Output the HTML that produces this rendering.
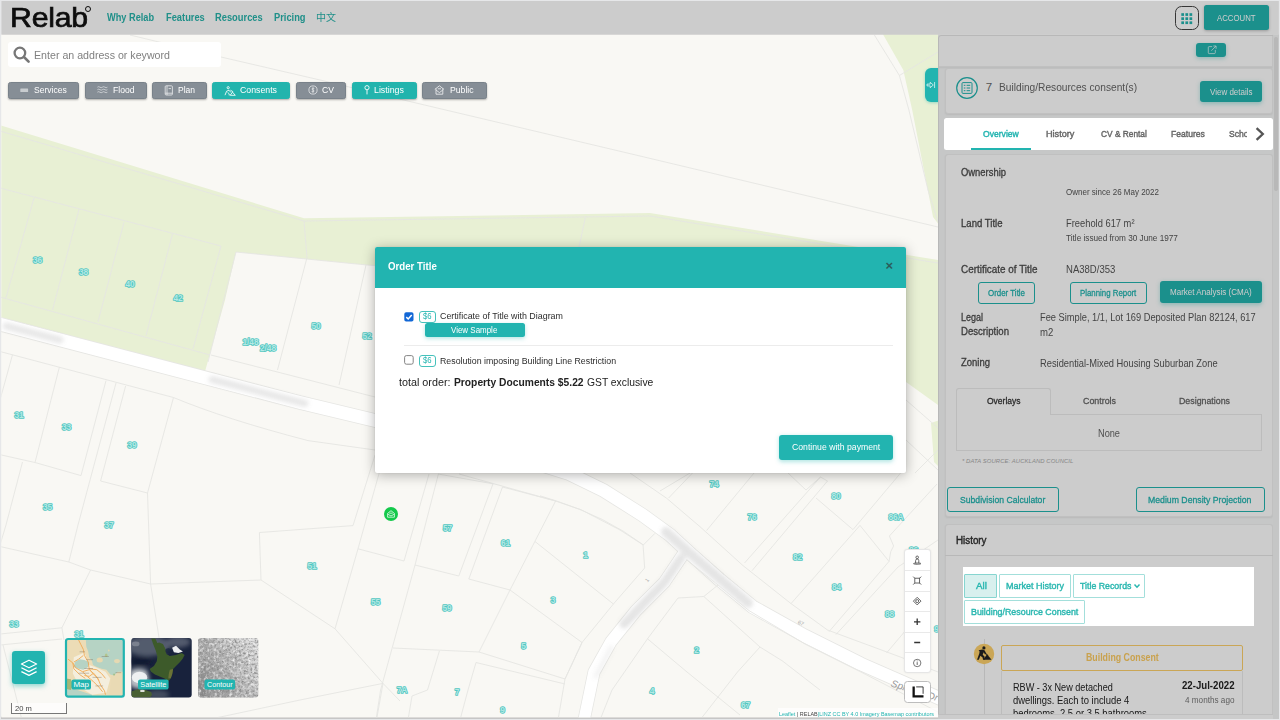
<!DOCTYPE html>
<html lang="en"><head>
<meta charset="utf-8">
<title>Relab - Order Title</title>
<style>
*{box-sizing:border-box;margin:0;padding:0}
html,body{width:1280px;height:720px;overflow:hidden}
body{background:#e6e7e9;font-family:"Liberation Sans","Noto Sans CJK SC",sans-serif;font-size:10px;color:#333;position:relative}
.abs,.t{position:absolute}
.t{white-space:nowrap;line-height:14px;display:block}
.layer{position:absolute;left:0;top:0;width:1280px;height:720px}
#hdr{clip-path:inset(1px 1.1px 685.300px 1.4px);background:#fff;z-index:5}
#map{clip-path:inset(34px 341.5px 2.8px 1.4px);background:#f9f8f4}
#panel{clip-path:inset(34px 1.1px 1.1px 938px);background:#f8f9f9;font-size:10.5px}
#hdr .logo{left:9.6px;top:0.6px;font-size:27.5px;line-height:34px;color:#111;-webkit-text-stroke:.7px #111;letter-spacing:-0.2px;transform:scaleX(1.1);transform-origin:0 0}
#hdr .deg{left:85.3px;top:5.9px;width:6.1px;height:6.1px;border:1.5px solid #111;border-radius:50%}
#hdr nav a{position:absolute;top:11.2px;font-size:10.3px;font-weight:700;line-height:14px;color:#28b4ac;text-decoration:none;white-space:nowrap}
#grid{left:1175px;top:5.800px;width:23.800px;height:24.300px;border:1px solid #444;border-radius:6.5px;background:#fff}
#acct{left:1203.500px;top:5.300px;width:65.300px;height:24.700px;border-radius:2.5px;background:#22b4b0;color:#fff;box-shadow:0 1px 3px rgba(0,0,0,.25)}
.dim{position:absolute;background:rgba(0,0,0,.2);pointer-events:none}
/* map */
#map svg.base{position:absolute;left:0;top:0}
#search{left:8.1px;top:42.1px;width:213px;height:25px;background:#fff;border-radius:3px}
.lyr{position:absolute;top:82px;height:16.500px;border-radius:2.500px;border:1px solid #79828a;background:#868e96;color:#fff;font-size:9px;box-shadow:0 1px 2px rgba(0,0,0,.3)}
.lyr.on{background:#22b4ad;border-color:#22b4ad}
.lyr .t{top:.2px;margin-left:-1px;color:#fff;font-size:9px}
.lyr svg{position:absolute;margin:-1px 0 0 -1px}
.teal{color:#22b4b0}

/* panel */
.card{position:absolute;background:#fff;border:1px solid #f0f0f0;border-radius:3px;box-shadow:0 1px 2px rgba(0,0,0,.07)}
.lab{font-weight:400;color:#4c4c4c;font-size:10.200px;-webkit-text-stroke:.3px #4c4c4c;margin-top:.8px}
.val{color:#555;font-size:10.5px}
.sm{color:#555;font-size:9px}
.btn{position:absolute;border-radius:3px;background:#22b4b0;box-shadow:0 1.5px 4px rgba(34,180,176,.35)}
.btn .t{color:#fff;font-size:9.75px}
.obtn{position:absolute;border-radius:3px;border:1.500px solid #22b4b0;background:transparent}
.obtn .t{color:#22b4b0;font-size:9.75px;font-weight:400!important;-webkit-text-stroke:.3px #22b4b0}
#tabs{left:944px;top:117.500px;width:329px;height:32.500px;background:#fff;z-index:3;border-radius:2.500px}
#tabs .t{font-size:9.900px;font-weight:400;color:#666;top:9.500px;-webkit-text-stroke:.45px currentColor}
#filter{left:963px;top:566.8px;width:291.3px;height:59px;background:#fff;z-index:3}
.fbtn{position:absolute;border:1.400px solid #a3dfdb;border-radius:1px;background:#fff;height:24.200px}
.fbtn .t{color:#2ab7b0;font-size:9.75px!important;top:4.300px;font-weight:400!important;-webkit-text-stroke:.42px #2ab7b0}
.md{font-weight:400!important;-webkit-text-stroke:.3px currentColor}
/* modal */
#modal{left:375px;top:247px;width:531px;height:226px;background:#fff;border-radius:2px;box-shadow:0 2px 13px rgba(0,0,0,.3),0 0 2px rgba(0,0,0,.1);z-index:10}
#modal .mh{left:0;top:0;width:531px;height:41px;background:#22b4b0;border-radius:2px 2px 0 0}
.badge{position:absolute;width:16.300px;height:12.200px;border:1px solid #45c1bb;border-radius:3px}
.badge .t{left:3px;top:-1.6px;font-size:8.2px;color:#22b4b0}
/* map ui */
.ctl{position:absolute;background:#fff;border:1px solid #e4e4e4}
.mlab text{font-size:8.300px;font-weight:700;fill:#b4e8e4;stroke:#52c7c1;stroke-width:1.700px;paint-order:stroke;stroke-linejoin:round;text-anchor:middle;font-family:"Liberation Sans",sans-serif}
</style>
</head>
<body>
<div id="botline" class="abs" style="left:1.4px;top:716px;width:940px;height:2.9px;background:#c6c6c6"></div>
<main id="map" class="layer">
  <svg class="base" width="1280" height="720" viewBox="0 0 1280 720">
    <defs>
      <filter id="bl" x="-20%" y="-50%" width="140%" height="200%"><feGaussianBlur stdDeviation="2.2"></feGaussianBlur></filter>
    </defs>
    <rect x="0" y="30" width="940" height="690" fill="#f9f8f4"></rect>
    <g fill="#e8f0d4">
      <path d="M0 125.300 L304 218.300 L650 213 L938 260 L938 405 L906 382 L906 290 L367 265 L236 252 L225 300 L205 371.500 L0 317 Z"></path>
      <path d="M882.800 34 L940 34 L940 226 L933 217 L912.200 110 L903.300 70 Z"></path>
      <path d="M931 423 L940 420 L940 468 L934 462 Z"></path>
    </g>
    <g fill="none" stroke-linecap="round" stroke-linejoin="round">
      <path d="M-10 321.600 L0 324.200 L300 402.500 L375 420.400 L500 452 L568.300 473.300 L604.200 490.800 L642.500 515 L670 535 L689 552.500 L720 580 L752.500 606.800 L805 636 L861 664 L937.500 697.500 L955 705" stroke="#e6e6e3" stroke-width="14.400"></path>
      <path d="M684 553 L664.200 582.500 L636 610.600 L611 641.600 L594 672 L583 725" stroke="#e6e6e3" stroke-width="13"></path>
      <path d="M-10 321.600 L0 324.200 L300 402.500 L375 420.400 L500 452 L568.300 473.300 L604.200 490.800 L642.500 515 L670 535 L689 552.500 L720 580 L752.500 606.800 L805 636 L861 664 L937.500 697.500 L955 705" stroke="#ffffff" stroke-width="12.800"></path>
      <path d="M684 553 L664.200 582.500 L636 610.600 L611 641.600 L594 672 L583 725" stroke="#ffffff" stroke-width="11.400"></path>
    </g>
    <g fill="none" stroke-linecap="round" filter="url(#bl)">
      <path d="M6 326 L60 340" stroke="#8c8c8c" stroke-opacity=".2" stroke-width="7"></path>
      <path d="M212 379.500 L305 403.500" stroke="#8c8c8c" stroke-opacity=".2" stroke-width="7"></path>
      <path d="M666 532 L689 552.500 L748 603" stroke="#777" stroke-opacity=".2" stroke-width="10"></path>
      <path d="M681 558 L664.200 582.500 L624 624" stroke="#777" stroke-opacity=".2" stroke-width="9"></path>
      <path d="M611 648 L596 676" stroke="#8c8c8c" stroke-opacity=".1" stroke-width="5"></path>
    </g>
    <g fill="none" stroke="#e5e5e2" stroke-width=".9" stroke-linejoin="round">
      <!-- north area -->
      <path d="M130 35 L221 57 L320 80 L395 98 L640 156 L938 227"></path>
      <path d="M874.400 35 L899.400 75.500 L908.900 110 L928 190 L938 222 M899.400 75.500 L938 52"></path>
      <path d="M0 131 L304 221 L307 257.5 M304 221 L650 216 L938 263"></path>
      <path d="M0 188 L221 246 L193 349 M34 198 L5.6 299 M79 209.5 L52.5 310 M124 222 L98 322 M172.5 234 L146 335.5 M0 297 L210 355"></path>
      <path d="M236 252 L208 362 M236 252 L367 265 L430 270 M307 257.5 L277.5 370 M366 265 L339 385"></path>
      <path d="M211 355 L375 397 M585.600 216.400 L579 247"></path>
      <!-- south-west parcels -->
      <path d="M0 351.5 L173.5 397.5 Q225 419 308 440.6 L375 450"></path>
      <path d="M12.5 354.7 L0 400 M59.4 367 L35 462.5 M106 380.6 L81 475.6 M116 383 L78 525 L68.8 562 M125.6 386 L100.6 481 L147.5 493 L173.5 397.5"></path>
      <path d="M0 454.7 L35 462.5 L81 475.6 M22.5 462 L6 525 L0 545 M147.5 493 L150.6 584"></path>
      <path d="M0 546.5 L68.8 562 L90.6 570 L150.6 584 L261 580 L259.4 532.5 L353 525.6 L375 455"></path>
      <path d="M90.6 570 L61.9 627.8 L64 640 M0 634 L61.9 627.8 M0 645 L62 639 M3 645 L22 720 M150.6 584 L159.4 640"></path>
      <path d="M261 580 L335 628.8 L383 683.4 L400 701 M335 628.8 L358 548.8 L380 470 M358 548.8 L404 561 M383 683.4 L300 700 L218 717.5 M383 683.4 L376.5 720"></path>
      <!-- central parcels -->
      <path d="M404 561 L429 474 M438.4 474 L415 565 L380.6 690 L376 720 M415 565 L458.8 576 L493 483.8 M438 474 L493 483.8"></path>
      <path d="M502.5 487 L468.8 579 L510 590 L555.6 501 Z M510 590 L479 652 L393 648 M479 652 L565 679 L582 642.5 L510 590"></path>
      <path d="M459 474 L555.6 501 Q605 516 643 544.7 L644.7 568 L613.4 604 L582 642.5 L565 679 L558 720 M535 541.5 L613.4 604"></path>
      <path d="M439.4 651 L427.5 690 L412 696 L408 720 M476 662.5 L468 690 L460 720 M476 662.5 L565 684"></path>
      <!-- east of branch road -->
      <path d="M630 473 L666.700 498.300 L700 526.700 L743 565.600 L791 603.600 L827.500 630 L903 658 L938 672"></path>
      <path d="M540 495.800 L556 500.800 L581.700 510 L620 530 L643.300 545 L655 533.300"></path>
      <path d="M687 560 L718 585 L749 610.6 L805 644 L861 672 L938 712 M718 585 L703.8 596.5 L678 598 L647.5 638.8 L612 690 L600 720 M703.8 596.5 L760 647 L782.5 661 L820 690 M647.5 638.8 L687 672 L740 715 M760 647 L737.5 672 L700 720"></path>
      <path d="M660 491 L690 473 M668.6 498 L692.5 473 M706.6 530.5 L754 473 M744.5 563 L820.5 477 L827.5 481 L752 570.7 M788 473 L806 490 L820.5 477 M816 498 L853 529.6 L900.6 473"></path>
      <path d="M791 603.6 L860 525.4 L889 561.4 L829 631.7 M836 634.5 L898 567 L938 540 M889.4 536 L937 484 M889.4 536 L893.6 546 L890.8 551.5 L889 561.4 M886.5 653 L906 630"></path>
      <path d="M906 400 L938 428 M906 440 L938 470 M915 473 L938 450"></path>
    </g>
    <g class="mlab">
      <text x="37.5" y="263.1">36</text>
      <text x="83.5" y="275.1">38</text>
      <text x="130" y="287.1">40</text>
      <text x="178" y="300.6">42</text>
      <text x="316" y="329.1">50</text>
      <text x="367" y="338.6">52</text>
      <text x="250.5" y="345.1">1/48</text>
      <text x="268" y="351.1">2/48</text>
      <text x="19" y="417.6">31</text>
      <text x="66.5" y="430.1">33</text>
      <text x="132" y="448.1">39</text>
      <text x="47.5" y="510.1">35</text>
      <text x="109" y="527.6">37</text>
      <text x="14" y="626.6">33</text>
      <text x="79" y="637.1">31</text>
      <text x="312" y="568.6">51</text>
      <text x="447.5" y="530.6">57</text>
      <text x="505.5" y="545.6">61</text>
      <text x="585.5" y="558.1">1</text>
      <text x="375.5" y="604.6">55</text>
      <text x="447" y="611.1">59</text>
      <text x="553" y="602.6">3</text>
      <text x="523.5" y="648.6">5</text>
      <text x="402" y="693.1">7A</text>
      <text x="457" y="695.1">7</text>
      <text x="502.5" y="712.6">9</text>
      <text x="714" y="487.1">74</text>
      <text x="752" y="520.1">76</text>
      <text x="836" y="499.1">80</text>
      <text x="896" y="519.6">86A</text>
      <text x="797.5" y="560.1">82</text>
      <text x="836.5" y="589.6">84</text>
      <text x="889.5" y="616.6">88</text>
      <text x="696.5" y="652.6">2</text>
      <text x="652" y="693.6">4</text>
      <text x="745.5" y="708.1">67</text>
      <text x="936.5" y="631.6">9</text>
      <text x="913.5" y="553.1">86</text>
    </g>
    <text x="801" y="625" transform="rotate(27 801 623)" font-size="5.5" fill="#aaa" text-anchor="middle" font-family="Liberation Sans, sans-serif">67</text>
    <text x="647" y="582" transform="rotate(-50 647 580)" font-size="5.5" fill="#aaa" text-anchor="middle" font-family="Liberation Sans, sans-serif">1</text>
    <text x="914.600" y="694" transform="rotate(18 914.600 690.800)" font-size="10" font-style="italic" fill="#9a9a9a" text-anchor="middle" font-family="Liberation Sans, sans-serif">Spinella Dr</text>

  </svg>
  <div id="search" class="abs">
    <svg width="22" height="22" viewBox="0 0 22 22" style="position:absolute;left:3px;top:3px">
      <circle cx="8.9" cy="8" r="5.3" fill="none" stroke="#777" stroke-width="2.3"></circle>
      <path d="M13.2 12.3 L17.6 16.6" stroke="#777" stroke-width="2.6" stroke-linecap="round"></path>
    </svg>
    <span class="t" style="left: 26.4px; top: 5.8px; font-size: 10.6px; color: rgb(128, 128, 128); transform: scaleX(1.004); transform-origin: 0px 0px;">Enter an address or keyword</span>
  </div>
  <div class="lyr" style="left:8px;width:71px"><svg width="9" height="5" viewBox="0 0 9 5" style="left:12.300px;top:5.800px"><rect x=".3" y=".4" width="7.800" height="3.500" rx=".5" fill="#fff" opacity=".55"></rect></svg><span class="t" style="left: 25.6px; transform: scaleX(0.95); transform-origin: 0px 0px;">Services</span></div>
  <div class="lyr" style="left:84.500px;width:62.500px"><svg width="11" height="8" viewBox="0 0 11 8" style="left:12.300px;top:4.300px"><g fill="none" stroke="#fff" stroke-width=".9" opacity=".6"><path d="M.4 1.200q1.200-1 2.500 0t2.500 0 2.500 0 2.500 0M.4 3.700q1.200-1 2.500 0t2.500 0 2.500 0 2.500 0M.4 6.200q1.200-1 2.500 0t2.500 0 2.500 0 2.500 0"></path></g></svg><span class="t" style="left: 28px; transform: scaleX(0.955); transform-origin: 0px 0px;">Flood</span></div>
  <div class="lyr" style="left:152.200px;width:54.800px"><svg width="10" height="11" viewBox="0 0 10 11" style="left:11.800px;top:2.800px"><g fill="none" stroke="#fff" stroke-width=".85" opacity=".8"><rect x="1.200" y=".8" width="7.200" height="9.200" rx="1"></rect><path d="M3 .8v9.200M4.600 3.600h2.400M1.200 8.200h7.200"></path></g></svg><span class="t" style="left: 25.5px; transform: scaleX(0.944); transform-origin: 0px 0px;">Plan</span></div>
  <div class="lyr on" style="left:212.200px;width:77.800px"><svg width="12" height="10" viewBox="0 0 12 10" style="left:12px;top:3.500px"><g fill="none" stroke="#fff" stroke-width=".85"><circle cx="4.200" cy="1.700" r="1.100"></circle><path d="M1 9.200l1.600-4 2.400-1 1.800 2.200M3.600 6.400l1.600 1.400v1.600M6.200 9.300l2.300-3.100 2.800 3.100zM6.400 4.200l2.800 1.600"></path></g></svg><span class="t" style="left: 27.8px; transform: scaleX(0.973); transform-origin: 0px 0px;">Consents</span></div>
  <div class="lyr" style="left:295.500px;width:50.500px"><svg width="10" height="10" viewBox="0 0 10 10" style="left:12.100px;top:3.200px"><g fill="none" stroke="#fff" stroke-width=".8" opacity=".8"><circle cx="5" cy="5" r="4.100"></circle><path d="M6.200 3.800q-.4-.8-1.300-.7t-.9.900q0 .7 1 1t1 1q0 .8-1 .9t-1.400-.8M5 2.300v5.400"></path></g></svg><span class="t" style="left: 26.2px; transform: scaleX(0.951); transform-origin: 0px 0px;">CV</span></div>
  <div class="lyr on" style="left:351.500px;width:65.300px"><svg width="6" height="10" viewBox="0 0 6 10" style="left:12.200px;top:3.400px"><g fill="none" stroke="#fff" stroke-width=".9"><circle cx="3" cy="2.700" r="2.100"></circle><path d="M3 4.800v4.600"></path></g></svg><span class="t" style="left: 22.9px; transform: scaleX(0.98); transform-origin: 0px 0px;">Listings</span></div>
  <div class="lyr" style="left:422px;width:64.500px"><svg width="11" height="10" viewBox="0 0 11 10" style="left:12.400px;top:3.300px"><g fill="none" stroke="#fff" stroke-width=".85" opacity=".85"><path d="M.8 4.400 5.400.8 10 4.400M2 3.600v5.600h6.800V3.600M2.200 5.200l3.200 2.400 3.200-2.400M3.800 3.800h3.200"></path></g></svg><span class="t" style="left: 27.6px; transform: scaleX(0.963); transform-origin: 0px 0px;">Public</span></div>
  <div class="abs" style="left:924.5px;top:68.3px;width:14px;height:33.500px;background:#22b4b0;border-radius:6px 0 0 6px;box-shadow:0 1px 3px rgba(34,179,172,.4)">
    <svg width="10" height="10" viewBox="0 0 10 10" style="position:absolute;left:1.8px;top:11.6px"><path d="M1 4.1h3.2V2.3L7.3 5 4.2 7.7V5.9H1zM8.6 2v6" fill="none" stroke="#fff" stroke-width=".8" opacity=".85"></path></svg>
  </div>
  <svg width="16" height="16" viewBox="0 0 16 16" style="position:absolute;left:382.8px;top:506.3px">
    <circle cx="8" cy="8" r="7" fill="#14c94b"></circle>
    <path d="M4.6 7.4 8 4.7l3.4 2.7v3.8H4.600z M4.8 8.2 8 10l3.200-1.800 M6.300 7.200h3.400" fill="none" stroke="#fff" stroke-width=".8" opacity=".9"></path>
  </svg>
  <div class="abs" style="left:904.200px;top:549.300px;width:26.500px;height:124.200px;background:#fff;border:1px solid #e6e6e6;border-radius:3px;box-shadow:0 0 2px rgba(0,0,0,.08)">
    <div class="abs" style="left:0;top:19.8px;width:24.4px;height:1px;background:#e9e9e9"></div>
    <div class="abs" style="left:0;top:40.3px;width:24.4px;height:1px;background:#e9e9e9"></div>
    <div class="abs" style="left:0;top:61px;width:24.4px;height:1px;background:#e9e9e9"></div>
    <div class="abs" style="left:0;top:81.5px;width:24.4px;height:1px;background:#e9e9e9"></div>
    <div class="abs" style="left:0;top:102.2px;width:24.4px;height:1px;background:#e9e9e9"></div>
    <svg width="24.4" height="122" viewBox="0 0 24.4 122" style="position:absolute;left:0;top:.7px">
      <g fill="none" stroke="#555" stroke-width=".9">
        <circle cx="12.2" cy="6.300" r="1.3"></circle><path d="M10.600 12.200V9.600a1.600 1.600 0 0 1 3.200 0v2.600M8.500 12.600c0-.800 7.400-.800 7.400 0s-7.400.800-7.400 0z"></path>
        <rect x="9.800" y="27.200" width="4.800" height="4.800"></rect><path d="M8.200 25.600l1.600 1.600M16.200 25.600l-1.600 1.600M8.200 33.600l1.600-1.600M16.200 33.600l-1.600-1.600"></path>
        <path d="M12.200 46.300l3.800 3.800-3.800 3.800-3.800-3.800z"></path><circle cx="12.200" cy="50.100" r="1.500"></circle>
        <circle cx="12.200" cy="112" r="3.700" stroke-width=".8"></circle><path d="M12.200 111.200v2.800M12.200 109.600v.8" stroke-width=".9"></path>
      </g>
      <path d="M9 70.800h6.400M12.200 67.600v6.400M9.200 91.500h6" fill="none" stroke="#333" stroke-width="1.300"></path>
    </svg>
  </div>
  <div class="abs" style="left:903.600px;top:680.600px;width:27.200px;height:22px;background:#fff;border:1.3px solid #bdbdbd;border-radius:3.5px">
    <svg width="12" height="12" viewBox="0 0 12 12" style="position:absolute;left:7.200px;top:4.300px"><path d="M.5.500h2.300v8.700h8.700v2.300H.5z" fill="#111"></path><path d="M4.200.900h6.900v6.900" fill="none" stroke="#111" stroke-width=".8"></path></svg>
  </div>
  <div class="abs" style="left:777.5px;top:708.3px;width:160.5px;height:9px;background:rgba(255,255,255,.75)">
    <span class="t" style="left: 1.8px; top: 0.3px; font-size: 6.2px; line-height: 9px; color: rgb(68, 68, 68); transform: scaleX(0.882); transform-origin: 0px 0px;"><span class="teal">Leaflet</span> | RELAB<span class="teal">|LINZ CC BY 4.0 Imagery Basemap contributors</span></span>
  </div>
  <div class="abs" style="left:11.9px;top:650.9px;width:33.4px;height:33.1px;background:#22b4b0;border-radius:3.2px;box-shadow:0 2px 5px rgba(34,179,172,.5)">
    <svg width="20" height="20" viewBox="0 0 20 20" style="position:absolute;left:6.700px;top:7.300px"><g fill="none" stroke="#fff" stroke-width="1.250" stroke-linejoin="round"><path d="M10 2.200l7.600 3.800L10 9.800 2.400 6z"></path><path d="M2.400 9.800L10 13.600l7.600-3.800"></path><path d="M2.400 13.600L10 17.400l7.600-3.800"></path></g></svg>
  </div>
  <svg width="196" height="62" viewBox="0 0 196 62" style="position:absolute;left:63.600px;top:636.700px">
    <defs>
      <clipPath id="c1"><rect x="2" y="2" width="57.800" height="57.600" rx="2"></rect></clipPath>
      <clipPath id="c2"><rect x="67.400" y="1" width="60.300" height="59.600" rx="3"></rect></clipPath>
      <clipPath id="c3"><rect x="134.100" y="1" width="60.200" height="59.600" rx="3"></rect></clipPath>
      <filter id="b1"><feGaussianBlur stdDeviation=".7"></feGaussianBlur></filter>
      <filter id="b2"><feGaussianBlur stdDeviation="2.200"></feGaussianBlur></filter>
      <filter id="b3"><feGaussianBlur stdDeviation=".35"></feGaussianBlur></filter>
      <filter id="nz" x="0" y="0" width="100%" height="100%">
        <feTurbulence type="fractalNoise" baseFrequency=".45" numOctaves="3" seed="11" result="n"></feTurbulence>
        <feColorMatrix in="n" type="matrix" values="0 0 0 0 .25  0 0 0 0 .25  0 0 0 0 .25  2.200 0 0 0 -.85"></feColorMatrix>
      </filter>
      <filter id="nz3" x="0" y="0" width="100%" height="100%">
        <feTurbulence type="fractalNoise" baseFrequency=".32" numOctaves="3" seed="23" result="n"></feTurbulence>
        <feColorMatrix in="n" type="matrix" values="0 0 0 0 1  0 0 0 0 1  0 0 0 0 1  0 1.700 0 0 -.8"></feColorMatrix>
      </filter>
      <filter id="nz2" x="0" y="0" width="100%" height="100%">
        <feTurbulence type="fractalNoise" baseFrequency=".07" numOctaves="2" seed="3" result="n"></feTurbulence>
        <feColorMatrix in="n" type="matrix" values="0 0 0 0 1  0 0 0 0 1  0 0 0 0 1  0 2.600 0 0 -.95"></feColorMatrix>
      </filter>
      <linearGradient id="cg" gradientUnits="userSpaceOnUse" x1="134" y1="50" x2="194" y2="14"><stop offset="0" stop-color="#868686"></stop><stop offset=".5" stop-color="#b0b0b0"></stop><stop offset="1" stop-color="#dcdcdc"></stop></linearGradient>
    </defs>
    <g clip-path="url(#c1)">
      <rect x="0" y="0" width="62" height="62" fill="#ecdcb6"></rect>
      <path d="M9.8 20.3 L20.4 15.5 L25.2 27.9 L30.9 29.9 L41.5 34.7 L46.3 41.4 L42.4 55.7 L28.0 57.7 L15.6 50.0 L8.9 36.6Z" fill="#f4eedd" filter="url(#b1)"></path>
      <path d="M47.2 38.5 L59.7 34.7 L59.7 59.6 L44.3 59.6 L46.3 50.0Z" fill="#e9dab4"></path>
      <g filter="url(#b3)"><path d="M21.8 2.1 L59.7 2.1 L59.7 34.7 L53.9 34.7 L50.1 38.5 L46.3 37.5 L42.4 32.7 L37.6 31.8 L32.8 29.9 L29.0 27.9 L28.0 24.1 L25.2 20.3 L24.2 14.5 L22.3 9.7Z" fill="#b6d3c4"></path><path d="M10.8 25.1 L15.6 22.2 L20.4 23.1 L25.2 25.1 L24.2 29.9 L19.4 32.7 L14.6 31.8 L9.8 29.9Z" fill="#b6d3c4"></path><path d="M2.2 52.4 L8.9 51.4 L15.6 53.8 L28.0 57.7 L28.0 60.5 L2.2 60.5Z" fill="#b6d3c4"></path><path d="M2.2 41.4 L6.9 42.3 L8.9 48.1 L6.9 52.9 L2.2 51.9Z" fill="#a5b676"></path>
      <ellipse cx="35.7" cy="23.0" rx="3.1" ry="2.5" fill="#e8d8ae" opacity="1"></ellipse><ellipse cx="42.2" cy="18.2" rx="1.3" ry="1.7" fill="#b2c48c" opacity="1"></ellipse><ellipse cx="53.0" cy="24.1" rx="2.9" ry="2.1" fill="#ead9b0" opacity="0.9"></ellipse><ellipse cx="44.8" cy="13.6" rx="0.8" ry="1.0" fill="#e8d8ae" opacity="1"></ellipse><ellipse cx="50.1" cy="37.5" rx="1.0" ry="1.0" fill="#a5c08a" opacity="1"></ellipse></g>
      <g fill="none" stroke="#f0a64e" stroke-width="1" opacity=".85" filter="url(#b3)"><path d="M14.6 3.0 L17.0 7.8 L19.4 12.6 L20.4 18.4 L24.2 25.1 L25.2 31.8 L29.0 36.6 L33.8 41.4 L36.7 48.1 L40.5 53.8 L41.5 57.7"></path><path d="M4.1 22.2 L8.9 26.0 L11.7 30.8 L18.5 34.7 L25.2 32.7 L30.9 37.5 L34.8 43.3"></path><path d="M19.4 18.4 L14.6 22.2 L9.8 25.1"></path><path d="M18.5 34.7 L23.2 39.4 L29.0 44.2 L34.8 50.0 L38.6 54.8"></path><path d="M25.2 31.8 L32.8 32.7 L37.6 36.6 L41.5 41.4"></path><path d="M8.9 26.0 L9.8 31.8 L15.6 37.5 L21.3 41.4"></path><path d="M29.0 36.6 L25.2 39.4 L20.4 38.5"></path></g>
      <g fill="#7a6a5a" opacity=".55"><rect x="15.6" y="14.5" width="5.3" height=".7"></rect><rect x="22.3" y="22.4" width="6.7" height=".7"></rect><rect x="20.4" y="31.3" width="8.6" height=".7"></rect><rect x="14.6" y="35.8" width="10.5" height=".7"></rect><rect x="28.5" y="39.9" width="9.1" height=".7"></rect><rect x="31.4" y="48.6" width="7.7" height=".7"></rect><rect x="37.6" y="19.1" width="7.2" height=".7"></rect><rect x="51.5" y="35.4" width="5.8" height=".7"></rect></g>
    </g>
    <rect x="2" y="2" width="57.800" height="57.600" rx="2.200" fill="none" stroke="#22b4b0" stroke-width="2.200"></rect>
    <g clip-path="url(#c2)">
      <rect x="66" y="0" width="64" height="62" fill="#18223c"></rect>
      <g filter="url(#b2)"><ellipse cx="84.2" cy="8.9" rx="22.1" ry="10.5" fill="#535b6d" opacity="1"></ellipse><ellipse cx="113.9" cy="5.0" rx="12.5" ry="5.8" fill="#5a6172" opacity="0.9"></ellipse><ellipse cx="76.5" cy="24.2" rx="11.5" ry="4.3" fill="#111a30" opacity="0.9"></ellipse><ellipse cx="93.8" cy="57.8" rx="11.5" ry="4.8" fill="#4d5566" opacity="0.8"></ellipse><ellipse cx="74.6" cy="34.7" rx="9.6" ry="3.8" fill="#9299a3" opacity="0.9"></ellipse><ellipse cx="74.6" cy="42.4" rx="10.5" ry="9.6" fill="#d5d8dc" opacity="0.85"></ellipse></g>
      <g filter="url(#b1)"><ellipse cx="75.5" cy="40.5" rx="7.7" ry="5.8" fill="#f4f5f6" opacity="0.9"></ellipse><ellipse cx="71.7" cy="6.9" rx="3.8" ry="2.4" fill="#8a909c" opacity="0.7"></ellipse><path d="M87.2 1.4 L91.4 1.4 L93.3 6.0 L95.2 5.5 L99.0 6.9 L101.4 11.7 L102.4 17.0 L105.8 18.9 L112.0 18.0 L117.7 16.1 L120.6 18.0 L118.7 21.8 L115.8 25.2 L112.0 29.0 L109.1 31.9 L108.1 36.7 L106.7 41.5 L104.3 44.3 L100.5 41.5 L95.7 39.5 L90.9 37.6 L87.1 34.7 L85.6 31.9 L89.9 29.0 L92.8 24.2 L93.3 19.4 L91.8 13.7 L89.5 7.9Z" fill="#3c5a2c"></path><path d="M67.4 54.4 L73.6 52.2 L81.3 53.0 L87.1 55.1 L88.0 57.8 L86.1 60.6 L67.4 60.6Z" fill="#4a6030"></path><path d="M105.8 32.8 L109.1 32.1 L108.3 37.1 L106.8 41.3 L104.3 41.5 L104.8 36.7Z" fill="#6b7336"></path><path d="M108.1 10.8 L112.0 8.7 L115.8 12.5 L118.9 14.4 L114.4 16.1 L109.9 15.2Z" fill="#eceef0"></path><ellipse cx="104.3" cy="13.7" rx="2.9" ry="2.4" fill="#1a2440" opacity="0.8"></ellipse><ellipse cx="78.4" cy="53.9" rx="2.4" ry="1.2" fill="#f0f0f0" opacity="0.9"></ellipse></g>
    </g>
    <g clip-path="url(#c3)">
      <rect x="133" y="0" width="63" height="62" fill="url(#cg)"></rect>
      <rect x="133" y="0" width="63" height="62" fill="#fff" filter="url(#nz2)" opacity=".2"></rect>
      <rect x="133" y="0" width="63" height="62" filter="url(#nz)"></rect>
      <rect x="133" y="0" width="63" height="62" filter="url(#nz3)"></rect>
    </g>
    <g fill="#22b4b0"><rect x="7.500" y="42.400" width="19.500" height="10.200" rx="2.200"></rect><rect x="74" y="42.400" width="30.600" height="10.200" rx="2.200"></rect><rect x="140.500" y="42.400" width="30.600" height="10.200" rx="2.200"></rect></g>
    <g fill="#fff" font-size="8" font-family="Liberation Sans, sans-serif" text-anchor="middle"><text x="17.200" y="50.400">Map</text><text x="89.300" y="50.400" textLength="26" lengthAdjust="spacingAndGlyphs">Satellite</text><text x="155.800" y="50.400" textLength="25.500" lengthAdjust="spacingAndGlyphs">Contour</text></g>
  </svg>
  <div class="abs" style="left:11.200px;top:702.5px;width:56px;height:11.300px;border:1.800px solid #777;border-top:0;background:rgba(255,255,255,.6)">
    <span class="t" style="left: 3.3px; top: 1px; font-size: 7.6px; line-height: 10px; color: rgb(68, 68, 68); transform: scaleX(0.995); transform-origin: 0px 0px;">20 m</span>
  </div>

</main>
<header id="hdr" class="layer">
  <span class="t logo">Relab</span>
  <span class="abs deg"></span>
  <nav>
    <a style="left: 107.3px; transform: scaleX(0.895); transform-origin: 0px 0px;">Why Relab</a>
    <a style="left: 165.6px; transform: scaleX(0.904); transform-origin: 0px 0px;">Features</a>
    <a style="left: 215.4px; transform: scaleX(0.906); transform-origin: 0px 0px;">Resources</a>
    <a style="left: 273.8px; transform: scaleX(0.902); transform-origin: 0px 0px;">Pricing</a>
    <a style="left: 316.1px; font-weight: 400; font-size: 10.2px; transform: scaleX(0.982); transform-origin: 0px 0px;">中文</a>
  </nav>
  <div id="grid" class="abs">
    <svg width="21.5" height="21.2" viewBox="0 0 21.5 21.2" style="position:absolute;left:.4px;top:1.100px">
      <g fill="#22b4b0">
        <rect x="5.3" y="5.2" width="2.7" height="2.7"></rect><rect x="9.4" y="5.2" width="2.7" height="2.7"></rect><rect x="13.5" y="5.2" width="2.7" height="2.7"></rect>
        <rect x="5.3" y="9.3" width="2.7" height="2.7"></rect><rect x="9.4" y="9.3" width="2.7" height="2.7"></rect><rect x="13.5" y="9.3" width="2.7" height="2.7"></rect>
        <rect x="5.3" y="13.4" width="2.7" height="2.7"></rect><rect x="9.4" y="13.4" width="2.7" height="2.7"></rect><rect x="13.5" y="13.4" width="2.7" height="2.7"></rect>
      </g>
    </svg>
  </div>
  <div id="acct" class="abs"><span class="t" style="left: 13.5px; top: 5.3px; font-size: 9.4px; color: rgb(255, 255, 255); transform: scaleX(0.833); transform-origin: 0px 0px;">ACCOUNT</span></div>
  <div class="dim" style="left:0;top:0;width:1280px;height:35px"></div>
</header>
<aside id="panel" class="layer">
  <div class="card" style="left:936px;top:30px;width:336.500px;height:37.300px;border-radius:0"></div>
  <div class="abs" style="left:937.800px;top:34.800px;width:345px;height:690px;border:1.200px solid #e6e6e6;border-radius:3px 0 0 0"></div>
  <div class="card" style="left:944.5px;top:68px;width:328px;height:45.5px"></div>
  <div class="btn" style="left:1196.3px;top:43px;width:30px;height:13.5px">
    <svg width="12" height="12" viewBox="0 0 12 12" style="position:absolute;left:9.6px;top:1px"><path d="M6.2 2.6H3.2a.9.9 0 0 0-.9.9v5.2a.9.9 0 0 0 .9.9h5.2a.9.9 0 0 0 .9-.9V5.9M5.4 6.7 9.8 2.2M7.3 2h2.8v2.8" fill="none" stroke="#fff" stroke-width=".9" opacity=".75"></path></svg>
  </div>
  <svg width="26" height="26" viewBox="0 0 26 26" style="position:absolute;left:953.600px;top:74.700px">
    <circle cx="13" cy="13" r="10.300" fill="none" stroke="#22b4b0" stroke-width="1.200"></circle>
    <rect x="8" y="7.6" width="10" height="10.8" rx="1" fill="none" stroke="#22b4b0" stroke-width="1"></rect>
    <path d="M9.8 10.3h1.6M12.6 10.3h3.6M9.8 13h1.6M12.6 13h3.6M9.8 15.7h1.6M12.6 15.7h3.6" stroke="#22b4b0" stroke-width="1" fill="none"></path>
  </svg>
  <span class="t" style="left:985.8px;top:80.2px;font-size:11.6px;color:#666">7</span>
  <span class="t" style="left: 999.3px; top: 80.2px; font-size: 11.6px; color: rgb(102, 102, 102); transform: scaleX(0.878); transform-origin: 0px 0px;">Building/Resources consent(s)</span>
  <div class="btn" style="left:1200px;top:81.3px;width:62px;height:20.8px"><span class="t" style="left: 9.5px; top: 3.9px; transform: scaleX(0.82); transform-origin: 0px 0px;">View details</span></div>

  <div class="card" style="left:944.5px;top:154.3px;width:328px;height:363px"></div>
  <span class="t lab" style="left: 960.5px; top: 165.5px; transform: scaleX(0.924); transform-origin: 0px 0px;">Ownership</span>
  <span class="t sm" style="left: 1066.3px; top: 185px; transform: scaleX(0.889); transform-origin: 0px 0px;">Owner since 26 May 2022</span>
  <span class="t lab" style="left: 960.5px; top: 216px; transform: scaleX(0.939); transform-origin: 0px 0px;">Land Title</span>
  <span class="t val" style="left: 1066.3px; top: 216px; transform: scaleX(0.889); transform-origin: 0px 0px;">Freehold 617 m²</span>
  <span class="t sm" style="left: 1066.3px; top: 231px; transform: scaleX(0.912); transform-origin: 0px 0px;">Title issued from 30 June 1977</span>
  <span class="t lab" style="left: 960.5px; top: 261.8px; transform: scaleX(0.972); transform-origin: 0px 0px;">Certificate of Title</span>
  <span class="t val" style="left: 1066.3px; top: 261.8px; transform: scaleX(0.908); transform-origin: 0px 0px;">NA38D/353</span>
  <div class="obtn" style="left:978px;top:281.7px;width:57px;height:22px"><span class="t" style="left: 8.7px; top: 3.2px; font-size: 9.75px; transform: scaleX(0.813); transform-origin: 0px 0px;">Order Title</span></div>
  <div class="obtn" style="left:1069.8px;top:281.7px;width:77.7px;height:22px"><span class="t" style="left: 9.4px; top: 3.2px; font-size: 9.75px; transform: scaleX(0.805); transform-origin: 0px 0px;">Planning Report</span></div>
  <div class="btn" style="left:1160px;top:281.3px;width:101.5px;height:21.3px"><span class="t" style="left: 10px; top: 3.7px; transform: scaleX(0.825); transform-origin: 0px 0px;">Market Analysis (CMA)</span></div>
  <span class="t lab" style="left: 960.5px; top: 310px; transform: scaleX(0.882); transform-origin: 0px 0px;">Legal</span>
  <span class="t lab" style="left: 960.5px; top: 324.5px; transform: scaleX(0.942); transform-origin: 0px 0px;">Description</span>
  <span class="t val" style="left: 1040px; top: 310px; transform: scaleX(0.884); transform-origin: 0px 0px;">Fee Simple, 1/1, Lot 169 Deposited Plan 82124, 617</span>
  <span class="t val" style="left: 1040px; top: 324.5px; transform: scaleX(0.911); transform-origin: 0px 0px;">m2</span>
  <span class="t lab" style="left: 960.5px; top: 355.5px; transform: scaleX(0.931); transform-origin: 0px 0px;">Zoning</span>
  <span class="t val" style="left: 1040px; top: 355.5px; transform: scaleX(0.887); transform-origin: 0px 0px;">Residential-Mixed Housing Suburban Zone</span>
  <div class="abs" style="left:956px;top:413.8px;width:305.8px;height:36.8px;border:1px solid #ebebeb"></div>
  <div class="abs" style="left:956px;top:388.3px;width:95.3px;height:26.5px;border:1px solid #ebebeb;border-bottom:0;background:#fff;border-radius:3px 3px 0 0"></div>
  <span class="t md" style="left: 986.8px; top: 394px; font-size: 9.75px; color: rgb(51, 51, 51); transform: scaleX(0.871); transform-origin: 0px 0px;">Overlays</span>
  <span class="t md" style="left: 1083.3px; top: 394px; font-size: 9.75px; color: rgb(102, 102, 102); transform: scaleX(0.909); transform-origin: 0px 0px;">Controls</span>
  <span class="t md" style="left: 1179.3px; top: 394px; font-size: 9.75px; color: rgb(102, 102, 102); transform: scaleX(0.905); transform-origin: 0px 0px;">Designations</span>
  <span class="t val" style="left: 1097.5px; top: 425.8px; color: rgb(102, 102, 102); transform: scaleX(0.876); transform-origin: 0px 0px;">None</span>
  <span class="t" style="left: 962px; top: 453.5px; font-size: 5.9px; font-style: italic; color: rgb(170, 170, 170); letter-spacing: 0.09px;">* DATA SOURCE: AUCKLAND COUNCIL</span>
  <div class="obtn" style="left:947px;top:487px;width:111.5px;height:24.7px"><span class="t" style="left: 12.3px; top: 4.5px; font-size: 9.75px; transform: scaleX(0.884); transform-origin: 0px 0px;">Subdivision Calculator</span></div>
  <div class="obtn" style="left:1136px;top:487px;width:128.7px;height:24.7px"><span class="t" style="left: 11.3px; top: 4.5px; font-size: 9.75px; transform: scaleX(0.892); transform-origin: 0px 0px;">Medium Density Projection</span></div>

  <div class="card" style="left:944.5px;top:523.7px;width:328px;height:220px"></div>
  <div class="abs" style="left:944.5px;top:555.2px;width:328px;height:1px;background:#e6e6e6"></div>
  <span class="t" style="left: 955.5px; top: 533.7px; font-size: 10px; color: rgb(51, 51, 51); -webkit-text-stroke: 0.42px rgb(51, 51, 51); transform: scaleX(0.98); transform-origin: 0px 0px;">History</span>
  <div class="abs" style="left:983.700px;top:638.500px;width:1.500px;height:90px;background:#e6e6e6"></div>
  <svg width="22" height="22" viewBox="0 0 22 22" style="position:absolute;left:972.800px;top:643.300px">
    <circle cx="11" cy="11" r="10.200" fill="#fdd06c"></circle>
    <circle cx="10.900" cy="4.900" r="1.600" fill="#222"></circle>
    <path d="M5.600 7.200 9.400 6.400l2.400 1.200 1.500 3.300-1.300.6-1.300-2.200-1 2.500 1.800 1.800.3 3.200H10l-.4-2.400-2.200-1.700-1.600 4.100H4l2.300-6.300.3-2.100z" fill="#222"></path>
    <path d="M14 11.300l4.600 5.500h-8.300z" fill="#222"></path><path d="M11.600 9.300l3.300 3.300" stroke="#222" stroke-width="1" fill="none"></path>
  </svg>
  <div class="abs" style="left:1001.3px;top:644.5px;width:241.8px;height:26.3px;border:1.200px solid #fdd06c;border-radius:2px"></div>
  <span class="t" style="left: 1086px; top: 650.5px; font-size: 10.2px; font-weight: 700; color: rgb(252, 203, 98); transform: scaleX(0.863); transform-origin: 0px 0px;">Building Consent</span>
  <div class="abs" style="left:1001.3px;top:670.5px;width:241.8px;height:60px;border:1px solid #ececec;border-top:0"></div>
  <span class="t" style="left: 1012.5px; top: 680.6px; font-size: 10.3px; color: rgb(34, 34, 34); transform: scaleX(0.885); transform-origin: 0px 0px;">RBW - 3x New detached</span>
  <span class="t" style="left: 1012.5px; top: 693.6px; font-size: 10.3px; color: rgb(34, 34, 34); transform: scaleX(0.915); transform-origin: 0px 0px;">dwellings. Each to include 4</span>
  <span class="t" style="left: 1012.5px; top: 706.6px; font-size: 10.3px; color: rgb(34, 34, 34); transform: scaleX(0.913); transform-origin: 0px 0px;">bedrooms, 2.5 or 3.5 bathrooms</span>
  <span class="t" style="left: 1182px; top: 677.8px; font-size: 10.5px; font-weight: 700; color: rgb(34, 34, 34); transform: scaleX(0.918); transform-origin: 0px 0px;">22-Jul-2022</span>
  <span class="t" style="left: 1185px; top: 693px; font-size: 9px; color: rgb(119, 119, 119); transform: scaleX(0.907); transform-origin: 0px 0px;">4 months ago</span>
  <div class="abs" style="left:938px;top:713.800px;width:342px;height:7px;background:#fff;border-top:1.400px solid #eee"></div>
  <div class="abs" style="left:1272.500px;top:35px;width:7px;height:685px;background:#f7f8f8"></div>
  <div class="abs" style="left:1273.500px;top:37px;width:4px;height:154px;background:#e6e6e6;border-radius:2px"></div>

  <div class="dim" style="left:930px;top:30px;width:350px;height:690px;z-index:2"></div>

  <div id="tabs" class="abs">
    <span class="t" style="left: 38.5px; color: rgb(34, 180, 176); transform: scaleX(0.87); transform-origin: 0px 0px;">Overview</span>
    <span class="t" style="left: 102.3px; transform: scaleX(0.921); transform-origin: 0px 0px;">History</span>
    <span class="t" style="left: 157.3px; transform: scaleX(0.843); transform-origin: 0px 0px;">CV &amp; Rental</span>
    <span class="t" style="left: 227.3px; transform: scaleX(0.867); transform-origin: 0px 0px;">Features</span>
    <div class="abs" style="left:284.800px;top:0;width:18.200px;height:32px;overflow:hidden"><span class="t" style="left: 0px; transform: scaleX(0.868); transform-origin: 0px 0px;">Schools</span></div>
    <svg width="12" height="16" viewBox="0 0 12 16" style="position:absolute;left:309.5px;top:8.6px"><path d="M2.600 2.200 8.800 8 2.600 13.800" fill="none" stroke="#555" stroke-width="2.300"></path></svg>
    <div class="abs" style="left:26.5px;top:30.5px;width:60px;height:2px;background:#22b4b0"></div>
  </div>
  <div id="filter" class="abs">
    <div class="fbtn" style="left:1.3px;top:6.8px;width:32.5px;background:#d8f0ee;border-color:#86d5d0"><span class="t" style="left: 10.5px; transform: scaleX(0.996); transform-origin: 0px 0px;">All</span></div>
    <div class="fbtn" style="left:36px;top:6.8px;width:71.5px"><span class="t" style="left: 5.7px; font-size: 9.75px; transform: scaleX(0.923); transform-origin: 0px 0px;">Market History</span></div>
    <div class="fbtn" style="left:110px;top:6.8px;width:72px"><span class="t" style="left: 5.5px; font-size: 9.75px; transform: scaleX(0.902); transform-origin: 0px 0px;">Title Records</span>
      <svg width="8" height="8" viewBox="0 0 8 8" style="position:absolute;left:59.300px;top:7.800px"><path d="M1.500 2.600 4 5.200 6.500 2.600" fill="none" stroke="#2ab7b0" stroke-width="1.500"></path></svg></div>
    <div class="fbtn" style="left:1.3px;top:33.2px;width:120.3px"><span class="t" style="left: 6.2px; font-size: 9.75px; transform: scaleX(0.908); transform-origin: 0px 0px;">Building/Resource Consent</span></div>
  </div>
</aside>
<section id="modal" class="abs">
  <div class="abs mh"></div>
  <span class="t" style="left: 13px; top: 13.2px; font-size: 10.3px; font-weight: 700; color: rgb(255, 255, 255); transform: scaleX(0.94); transform-origin: 0px 0px;">Order Title</span>
  <span class="t" style="left:510.500px;top:12.200px;font-size:13px;font-weight:700;color:#2b5d5b">×</span>
  <svg width="10" height="10" viewBox="0 0 10 10" style="position:absolute;left:28.8px;top:64.6px"><rect x=".3" y=".3" width="9.2" height="9.2" rx="1.8" fill="#1267d6"></rect><path d="M2.3 5.1 4.2 7 7.7 3" fill="none" stroke="#fff" stroke-width="1.5"></path></svg>
  <div class="badge" style="left:44.3px;top:63.5px"><span class="t" style="transform: scaleX(0.944); transform-origin: 0px 0px;">$6</span></div>
  <span class="t" style="left: 65.3px; top: 61.8px; font-size: 9.6px; color: rgb(44, 44, 44); transform: scaleX(0.926); transform-origin: 0px 0px;">Certificate of Title with Diagram</span>
  <div class="btn" style="left:49.700px;top:75.800px;width:100px;height:14.600px;border-radius:2.500px"><span class="t" style="left: 26.8px; top: 0.2px; font-size: 9.4px; transform: scaleX(0.849); transform-origin: 0px 0px;">View Sample</span></div>
  <div class="abs" style="left:29px;top:98.2px;width:488.5px;height:1px;background:#ececec"></div>
  <svg width="10" height="10" viewBox="0 0 10 10" style="position:absolute;left:28.8px;top:108.4px"><rect x=".6" y=".6" width="8.6" height="8.6" rx="1.8" fill="#fff" stroke="#777" stroke-width=".9"></rect></svg>
  <div class="badge" style="left:44.3px;top:107.7px"><span class="t" style="transform: scaleX(0.944); transform-origin: 0px 0px;">$6</span></div>
  <span class="t" style="left: 65.3px; top: 106.5px; font-size: 9.6px; color: rgb(44, 44, 44); transform: scaleX(0.917); transform-origin: 0px 0px;">Resolution imposing Building Line Restriction</span>
  <span class="t" style="left: 24px; top: 127.7px; font-size: 10.5px; color: rgb(34, 34, 34); transform: scaleX(1.026); transform-origin: 0px 0px;">total order: </span>
  <span class="t" style="left: 78.8px; top: 127.7px; font-size: 10.5px; color: rgb(34, 34, 34); font-weight: 700; transform: scaleX(0.978); transform-origin: 0px 0px;">Property Documents $5.22</span>
  <span class="t" style="left: 211.8px; top: 127.7px; font-size: 10.5px; color: rgb(34, 34, 34); transform: scaleX(0.982); transform-origin: 0px 0px;">GST exclusive</span>
  <div class="btn" style="left:404px;top:187.5px;width:113.8px;height:25.5px"><span class="t" style="left: 12.8px; top: 5.8px; transform: scaleX(0.89); transform-origin: 0px 0px;">Continue with payment</span></div>
</section>


</body></html>
